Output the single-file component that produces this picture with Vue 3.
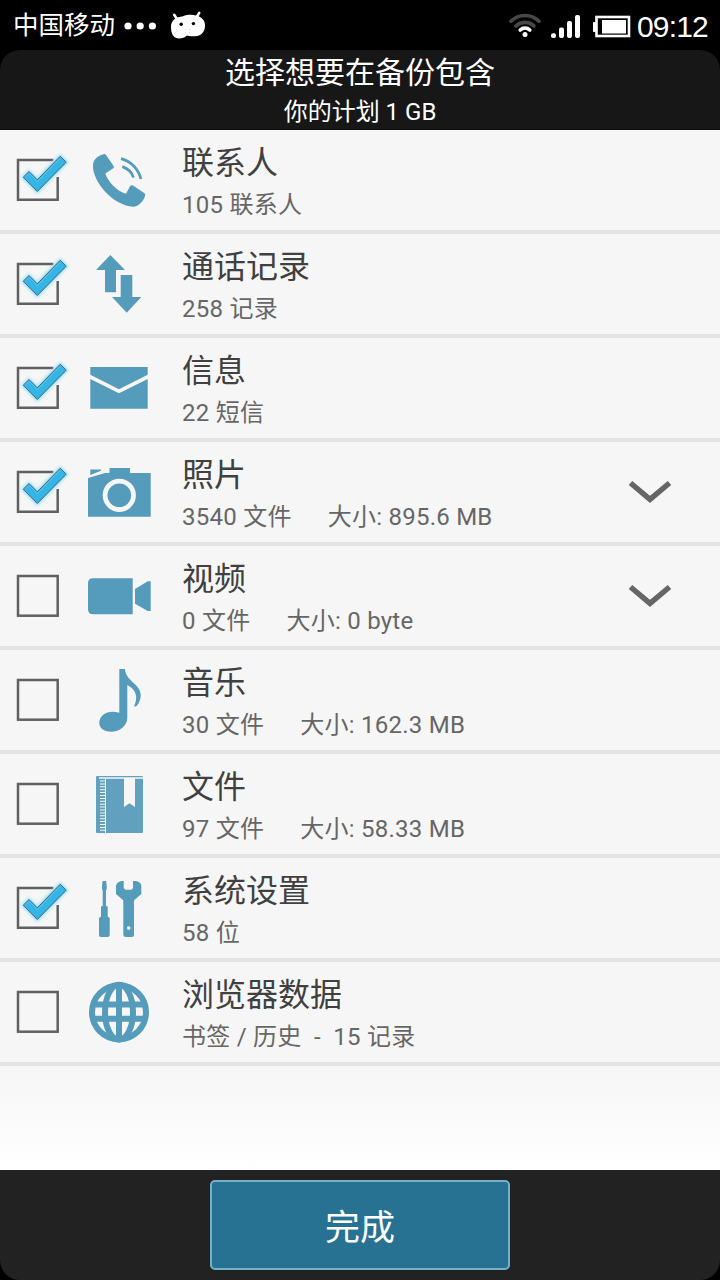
<template>
  <div class="screen">
    <div class="status-bar">
      <span class="carrier">中国移动</span>
      <svg class="dots" width="34" height="8" viewBox="0 0 34 8">
        <circle cx="4" cy="4" r="3.6" />
        <circle cx="16.2" cy="4" r="3.6" />
        <circle cx="28.4" cy="4" r="3.6" />
      </svg>
      <svg class="droid" width="36" height="28" viewBox="0 0 36 28">
        <path d="M4.2 3.8L7.5 9M29.2 1.8L26.2 7" stroke="#fff" stroke-width="2.6" stroke-linecap="round" />
        <path fill="#fff" d="M1 16C1 9 6 6 13 5.2C17 3.6 22 3.4 26 4.4C32 5.6 35 9.5 35 14.5C35 21 31 25.3 25 25.3C21 25.6 18.5 24.8 16.5 24.8C14.5 27 11.5 27.6 8.5 27.4C3.5 27 1 23 1 16Z" />
        <circle cx="11.2" cy="13.3" r="1.7" fill="#000" />
        <circle cx="23.4" cy="12.6" r="1.7" fill="#000" />
        <path d="M15 18.5h.8M19.2 18.5h.8M15 21.5h.8M19.2 21.5h.8" stroke="#ccc" stroke-width="1" />
      </svg>
      <div class="status-right">
        <svg width="34" height="28" viewBox="0 0 34 28" fill="none" stroke-linecap="round">
          <path d="M3 10.2C11 2.6 23 2.6 31 10.2" stroke="#484848" stroke-width="3.6" />
          <path d="M8 15C13 10.2 21 10.2 26 15" stroke="#484848" stroke-width="3.6" />
          <path d="M12.2 19C15 16.4 19 16.4 21.8 19" stroke="#fff" stroke-width="3.6" />
          <circle cx="17" cy="23.5" r="2.5" fill="#fff" />
        </svg>
        <svg class="signal" width="30" height="24" viewBox="0 0 30 24" fill="#fff">
          <rect x="0" y="18.2" width="5" height="4.8" rx="2" />
          <rect x="8" y="12.5" width="5" height="10.5" rx="2" />
          <rect x="16" y="6" width="5" height="17" rx="2" />
          <rect x="24" y="0" width="5" height="23" rx="2" />
        </svg>
        <svg class="battery" width="38" height="24" viewBox="0 0 38 24">
          <rect x="3.5" y="2" width="32.5" height="19" fill="none" stroke="#fff" stroke-width="2.6" />
          <rect x="0" y="7" width="3" height="10" rx="1" fill="#fff" />
          <rect x="9" y="5" width="24" height="13.5" fill="#fff" />
        </svg>
        <span class="clock">09:12</span>
      </div>
    </div>

    <header class="header">
      <h1>选择想要在备份包含</h1>
      <p>你的计划 1 GB</p>
    </header>

    <ul class="list">
      <li v-for="item in items" :key="item.id" class="row" @click="item.checked = !item.checked">
        <svg class="check" width="76" height="100" viewBox="0 0 76 100">
          <rect v-if="!item.checked" x="18" y="30" width="39.7" height="39.7" class="box" />
          <template v-else>
            <path d="M53.3 30H18V69.7H57.7V47" class="box" />
            <path :d="tick" class="tick-glow" />
            <path :d="tick" class="tick" />
            <path d="M25 47.3L29 43.2L37.3 51.5L60.3 28" class="tick-shine" />
          </template>
        </svg>

        <svg class="icon" width="72" height="72" viewBox="0 0 72 72">
          <template v-if="item.id === 'contacts'">
            <path d="M9 21C9 15 15 11 19.5 10.2Q21 9.7 22 11L29.6 22Q30.5 23.5 29 24.6L21.3 29.5C24 38 33 47 42 49.8L46 42.2Q47.3 40.5 49 41.5L60.5 49.3Q61.8 50.3 61 52C59 58 54 62.8 49.3 62.7C30 62 8 38 9 21Z" />
            <path class="line" d="M37 14.6C47 17.5 54 24.5 57 35M38.3 22.6C44 24.5 47.8 28 49.5 33.7" stroke-width="2.7" />
          </template>
          <path
            v-else-if="item.id === 'calls'"
            d="M26.3 7L41 22H32V44.3H21V22H12ZM36.7 27H48.3V49H57.3L42.7 64.7L28 49H36.7Z"
          />
          <path
            v-else-if="item.id === 'messages'"
            d="M6.3 15H63.7V22.7L35 37.3L6.3 22.7ZM6.3 27L35 41.3L63.7 27V56.7H6.3Z"
          />
          <template v-else-if="item.id === 'photos'">
            <path d="M6.3 13.5H17V14.8L6.3 19ZM4 22L21 17H25.5V12H46V17H66.7V60.7H4Z" />
            <circle class="hole-line" cx="35.3" cy="39.3" r="14.2" stroke-width="4.8" />
          </template>
          <path
            v-else-if="item.id === 'videos'"
            d="M9 18.2H48.7V54.3H9Q4 54.3 4 49.3V23.2Q4 18.2 9 18.2ZM51 29L63.7 21.3H66.7V51H63.7L51 43.7Z"
          />
          <path
            v-else-if="item.id === 'music'"
            d="M35.3 5H41C41.5 17 56.7 20 56.7 31C56.7 36 54.5 40 52 42.6L50 42.3C54 34 53 26 43.3 21V54C43 62 36 67.7 27 67.7C20 67.7 15.3 64 15.3 59C15.3 50 25 45.5 35.3 48.8Z"
          />
          <template v-else-if="item.id === 'files'">
            <rect class="book" x="12" y="8" width="47" height="57" rx="1" />
            <path class="hole" d="M15 9.3H59V10.7H51V39L45.5 35.3L40 39V10.7H15Z" />
            <path class="hole-line" d="M21.5 11V65" stroke-width="1" />
            <path class="hole-line" d="M18.5 12.5V64" stroke-width="5" stroke-dasharray="1 1.9" />
          </template>
          <template v-else-if="item.id === 'settings'">
            <path d="M18.5 9H22.2L22.8 16L22 19V34.3H23.7V44.5L25.7 46V63Q25.7 65 23.7 65H17Q15 65 15 63V46L17 44.5V34.3H18.7V19L17.9 16Z" />
            <path d="M39.7 9V16L41.5 17.7H47.5L49 16V9H52Q57.3 10 57.3 14V22L51 27.5L50 28.5V62.5Q50 65 47.5 65H42Q39.3 65 39.3 62.5V28.5L38.3 27.5L32 22V14Q32.5 10 37.5 9Z" />
            <circle class="hole" cx="44.7" cy="56" r="1.8" />
          </template>
          <g v-else class="line" stroke-width="6">
            <circle cx="35" cy="36.2" r="27" />
            <ellipse cx="35" cy="36.2" rx="14" ry="27.5" />
            <path d="M35 9V63M9.5 28.6H60.5M9.5 42.8H60.5" />
          </g>
        </svg>

        <div class="info">
          <div class="title">{{ item.title }}</div>
          <div class="detail">
            <span>{{ item.detail }}</span>
            <span v-if="item.size">大小: {{ item.size }}</span>
          </div>
        </div>

        <svg v-if="item.expandable" class="chevron" width="44" height="26" viewBox="0 0 44 26">
          <path d="M2.5 4L22 20.4L41.5 4" />
        </svg>
      </li>
    </ul>

    <footer class="footer">
      <button class="done">完成</button>
    </footer>
  </div>
</template>

<script setup>
import { ref } from 'vue'

const tick = 'M23.2 47.3L29 41.5L37.3 49.8L60.3 26.2L66.2 32.2L37.3 61.5Z'

const items = ref([
  { id: 'contacts', title: '联系人', detail: '105 联系人', checked: true },
  { id: 'calls', title: '通话记录', detail: '258 记录', checked: true },
  { id: 'messages', title: '信息', detail: '22 短信', checked: true },
  { id: 'photos', title: '照片', detail: '3540 文件', size: '895.6 MB', checked: true, expandable: true },
  { id: 'videos', title: '视频', detail: '0 文件', size: '0 byte', checked: false, expandable: true },
  { id: 'music', title: '音乐', detail: '30 文件', size: '162.3 MB', checked: false },
  { id: 'files', title: '文件', detail: '97 文件', size: '58.33 MB', checked: false },
  { id: 'settings', title: '系统设置', detail: '58 位', checked: true },
  { id: 'browser', title: '浏览器数据', detail: '书签 / 历史  -  15 记录', checked: false }
])
</script>

<style>
body {
  background: #000;
}
</style>

<style scoped>
.screen {
  width: 720px;
  height: 1280px;
  display: flex;
  flex-direction: column;
  overflow: hidden;
  background: #000;
  font-family: Roboto, 'Noto Sans CJK SC', sans-serif;
}

/* 状态栏 */
.status-bar {
  height: 50px;
  flex-shrink: 0;
  display: flex;
  align-items: center;
  padding: 0 12px 0 13px;
  color: #fff;
}
.carrier {
  font-size: 25.5px;
  line-height: 50px;
}
.dots {
  margin-left: 9px;
  margin-top: 1px;
  fill: #fff;
}
.droid {
  margin-left: 12px;
}
.status-right {
  margin-left: auto;
  display: flex;
  align-items: center;
}
.signal { margin-left: 9px; margin-top: 4px; }
.battery { margin-left: 12px; margin-top: 3px; }
.clock {
  margin-left: 6px;
  margin-top: 4px;
  font-family: 'Liberation Sans', sans-serif;
  font-size: 30px;
  line-height: 46px;
  letter-spacing: -0.8px;
}

/* 标题 */
.header {
  height: 80px;
  flex-shrink: 0;
  box-sizing: border-box;
  padding-top: 1px;
  background: #171717;
  border-bottom: 1px solid #120a12;
  border-radius: 20px 20px 0 0;
  color: #fff;
  text-align: center;
}
.header h1 {
  margin: 0;
  font-size: 30px;
  font-weight: 400;
  line-height: 44px;
}
.header p {
  margin: 0;
  font-size: 24px;
  line-height: 34px;
}

/* 列表 */
.list {
  flex: 1;
  margin: 0;
  padding: 0;
  list-style: none;
  background: linear-gradient(#f5f5f5 0, #f6f6f6 936px, #fff 100%);
}
.row {
  display: flex;
  align-items: center;
  height: 100px;
  border-bottom: 4px solid #e4e4e4;
  background: #f6f6f6;
}
.box {
  fill: none;
  stroke: #606060;
  stroke-width: 2.5px;
}
.tick {
  fill: #33b5e5;
  stroke: #4a6674;
  stroke-width: 1px;
}
.tick-glow {
  fill: none;
  stroke: #8fdcf8;
  stroke-width: 3px;
  filter: blur(1.5px);
}
.tick-shine {
  fill: none;
  stroke: #62c6ec;
  stroke-width: 1px;
}
.icon {
  margin-left: 8px;
  fill: #559bbb;
}
.line {
  fill: none;
  stroke: #559bbb;
}
.book { fill: #61a1bf; }
.hole { fill: #f6f6f6; }
.hole-line {
  fill: none;
  stroke: #f6f6f6;
}
.info {
  flex: 1;
  margin-left: 26px;
  padding-top: 4px;
}
.title {
  font-size: 32px;
  line-height: 46px;
  color: #404040;
}
.detail {
  display: flex;
  gap: 36px;
  font-size: 24px;
  line-height: 38px;
  letter-spacing: 0.25px;
  color: #666;
  white-space: pre;
}
.chevron {
  margin-right: 48px;
}
.chevron path {
  fill: none;
  stroke: #666;
  stroke-width: 5.5px;
}

/* 底部按钮 */
.footer {
  height: 110px;
  flex-shrink: 0;
  display: flex;
  align-items: center;
  justify-content: center;
  background: #222;
  border-radius: 0 0 20px 20px;
}
.done {
  width: 300px;
  height: 90px;
  box-sizing: border-box;
  padding: 0 0 2px;
  border: 2px solid #76b0cb;
  border-radius: 5px;
  background: #277292;
  color: #fff;
  font-family: inherit;
  font-size: 35px;
}
</style>
